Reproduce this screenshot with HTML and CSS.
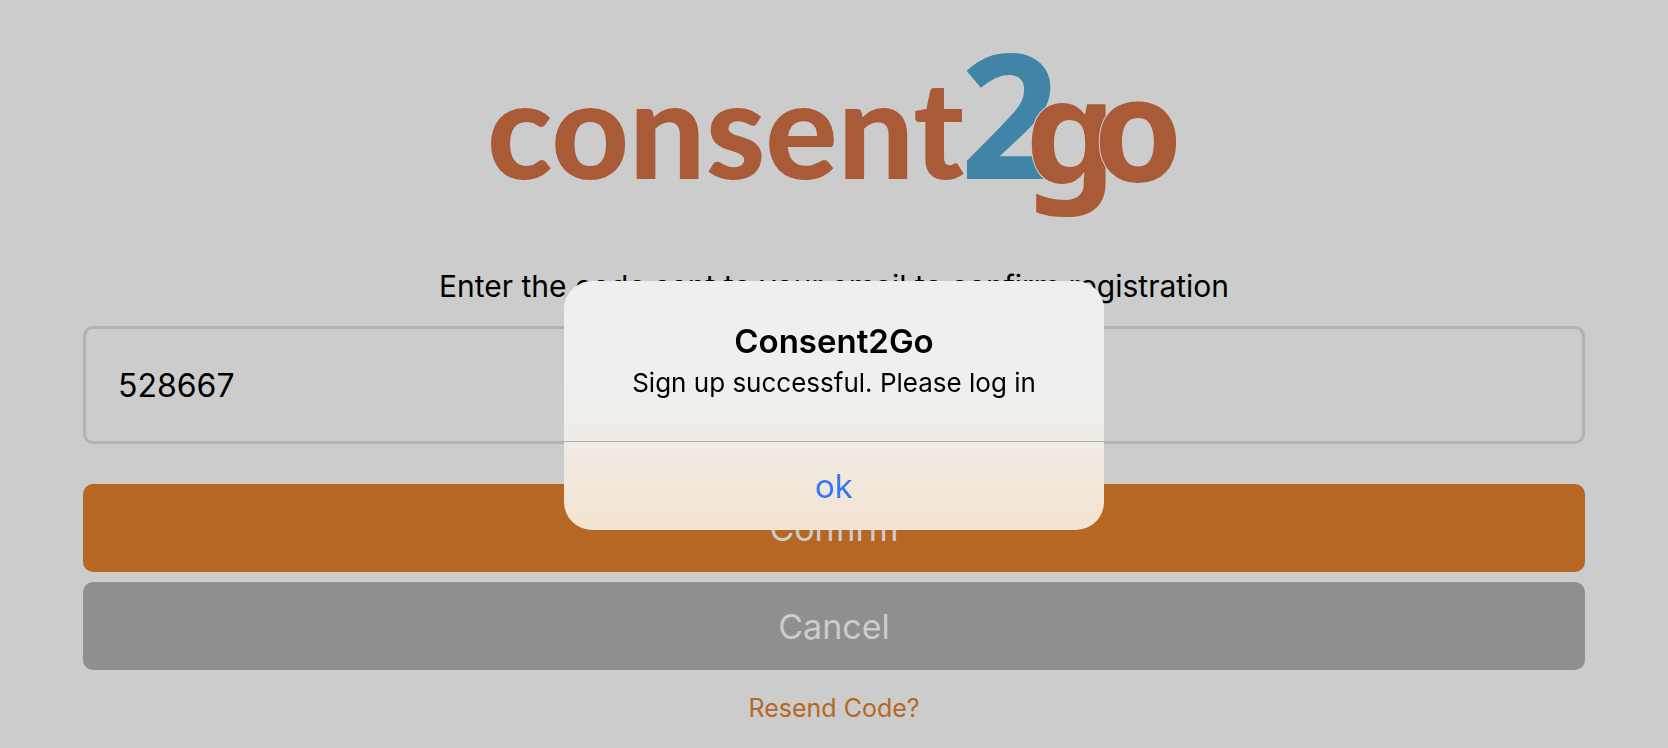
FILE: index.html
```html
<!DOCTYPE html>
<html lang="en">
<head>
<meta charset="utf-8">
<meta name="viewport" content="width=device-width, initial-scale=1">
<title>Consent2Go</title>
<link rel="stylesheet" href="styles.css">
</head>
<body>
<main class="page">
  <svg class="logo" viewBox="0 0 700 180" role="img" aria-label="consent2go">
    <text class="logo-consent" x="3" y="139">consent</text>
    <text class="logo-two" x="476" y="139">2</text>
    <text class="logo-go" x="541" y="142">g</text>
    <text class="logo-go" x="609" y="142">o</text>
  </svg>
  <form class="form">
    <label class="prompt" for="code">Enter the code sent to your email to confirm registration</label>
    <input class="code" id="code" type="text" value="528667">
    <button class="button confirm" type="button">Confirm</button>
    <button class="button cancel" type="button">Cancel</button>
    <a class="resend" href="#">Resend Code?</a>
  </form>
</main>
<div class="overlay">
  <section class="alert" role="alertdialog" aria-labelledby="alert-title" aria-describedby="alert-text">
    <div class="alert-body">
      <h1 class="alert-title" id="alert-title">Consent2Go</h1>
      <p class="alert-text" id="alert-text">Sign up successful. Please log in</p>
    </div>
    <button class="alert-ok" type="button">ok</button>
  </section>
</div>
</body>
</html>
```
FILE: styles.css
```css
* { box-sizing: border-box; }

body {
  margin: 0;
  min-height: 100vh;
  background: #ccc;
  color: #000;
  font-family: Inter, "Liberation Sans", sans-serif;
}

.page {
  display: flex;
  flex-direction: column;
  align-items: center;
  padding: 40px 83px 20px;
}

.logo {
  width: 700px;
  max-width: 100%;
  overflow: visible;
}

.logo-consent {
  fill: #a95a36;
  font: 900 135px Lato, sans-serif;
}

.logo-two {
  fill: #4085a8;
  font: 700 174px "Noto Sans", sans-serif;
}

.logo-go {
  fill: #a95a36;
  stroke: #ccc;
  stroke-width: 2px;
  paint-order: stroke;
  font: 700 144px "Noto Sans", sans-serif;
}

.form {
  display: flex;
  flex-direction: column;
  width: 100%;
  margin-top: 48px;
}

.prompt {
  font-size: 30px;
  line-height: 36px;
  text-align: center;
}

.code {
  width: 100%;
  height: 118px;
  margin: 22px 0 40px;
  padding: 0 32px;
  border: 3px solid #b2b2b2;
  border-radius: 10px;
  background: transparent;
  color: #000;
  font: 400 32px Inter, "Liberation Sans", sans-serif;
}

.button {
  height: 88px;
  border: 0;
  border-radius: 10px;
  color: #ccc;
  font: 400 34px Inter, "Liberation Sans", sans-serif;
}

.confirm { background: #b66724; }

.cancel {
  margin-top: 10px;
  background: #8f8f8f;
}

.resend {
  align-self: center;
  margin-top: 22px;
  color: #b66724;
  font-size: 25px;
  line-height: 32px;
  text-decoration: none;
}

.overlay {
  position: fixed;
  inset: 0;
  display: grid;
  place-items: center;
  padding-top: 63px;
}

.alert {
  width: 540px;
  max-width: 100%;
  overflow: hidden;
  border-radius: 28px;
  background: linear-gradient(#efefef 0%, #efefef 40%, #f0ede8 62%, #f2e9df 75%, #f3e3d0 100%);
  text-align: center;
}

.alert-body {
  padding: 39px 32px;
  border-bottom: 1px solid #b0adaa;
}

.alert-title {
  margin: 0;
  font-size: 33px;
  font-weight: 600;
  line-height: 42px;
}

.alert-text {
  margin: 2px 0 0;
  font-size: 26px;
  line-height: 38px;
}

.alert-ok {
  width: 100%;
  height: 88px;
  border: 0;
  background: transparent;
  color: #3478f6;
  font: 400 33px Inter, "Liberation Sans", sans-serif;
}
```
